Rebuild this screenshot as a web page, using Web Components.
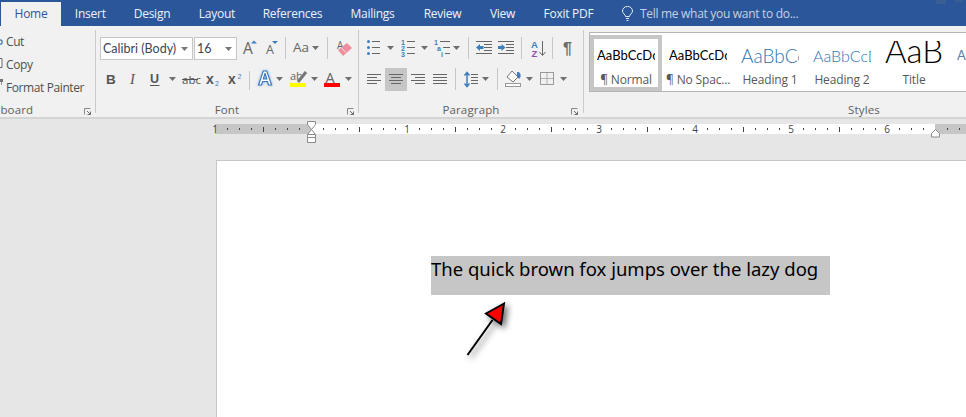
<!DOCTYPE html>
<html>
<head>
<meta charset="utf-8">
<title>Word</title>
<style>
  html, body { margin: 0; height: 417px; overflow: hidden; background: #e6e6e6; }
  body { font-family: "Open Sans", "Noto Sans", sans-serif; font-size: 11.5px; color: #555; }
</style>
</head>
<body>
<word-titlebar>
  <word-tab w="60" active>Home</word-tab>
  <word-tab w="58.5">Insert</word-tab>
  <word-tab w="65">Design</word-tab>
  <word-tab w="65">Layout</word-tab>
  <word-tab w="86">References</word-tab>
  <word-tab w="74">Mailings</word-tab>
  <word-tab w="66">Review</word-tab>
  <word-tab w="54">View</word-tab>
  <word-tab w="78">Foxit PDF</word-tab>
</word-titlebar>

<word-ribbon>
  <ribbon-group launcher style="width:179px;margin-left:-84px;--pad-top:0px;--pad-left:70px">
    <clip-row icon="cut">Cut</clip-row>
    <clip-row icon="copy">Copy</clip-row>
    <clip-row icon="painter">Format Painter</clip-row>
    <span slot="label" style="display:block;padding-left:2px">Clipboard</span>
  </ribbon-group>

  <ribbon-group launcher style="width:262px;--pad-left:4px">
    <tool-row>
      <combo-box w="93" mr="1" family="Lato">Calibri (Body)</combo-box>
      <combo-box w="43">16</combo-box>
      <rb-ico name="grow" gap="6"></rb-ico>
      <rb-ico name="shrink" gap="9"></rb-ico>
      <rb-ico name="sep" gap="7"></rb-ico>
      <rb-ico name="case" gap="7"></rb-ico>
      <rb-ico name="caret" gap="3"></rb-ico>
      <rb-ico name="sep" gap="8"></rb-ico>
      <rb-ico name="eraser" gap="8"></rb-ico>
    </tool-row>
    <tool-row>
      <rb-ico name="bold" gap="6"></rb-ico>
      <rb-ico name="italic" gap="13"></rb-ico>
      <rb-ico name="underline" gap="11"></rb-ico>
      <rb-ico name="caret" gap="9"></rb-ico>
      <rb-ico name="strike" gap="6"></rb-ico>
      <rb-ico name="sub" gap="8"></rb-ico>
      <rb-ico name="sup" gap="8"></rb-ico>
      <rb-ico name="sep2" gap="7"></rb-ico>
      <rb-ico name="effects" gap="8"></rb-ico>
      <rb-ico name="caret" gap="3"></rb-ico>
      <rb-ico name="highlight" gap="7"></rb-ico>
      <rb-ico name="caret" gap="4"></rb-ico>
      <rb-ico name="fontcolor" gap="6"></rb-ico>
      <rb-ico name="caret" gap="5"></rb-ico>
    </tool-row>
    <span slot="label">Font</span>
  </ribbon-group>

  <ribbon-group launcher style="width:224px;--pad-left:8px;--launch-right:5px">
    <tool-row>
      <rb-ico name="bullets"></rb-ico>
      <rb-ico name="caret" gap="7"></rb-ico>
      <rb-ico name="numbers" gap="7"></rb-ico>
      <rb-ico name="caret" gap="6"></rb-ico>
      <rb-ico name="multilevel" gap="6"></rb-ico>
      <rb-ico name="caret" gap="3"></rb-ico>
      <rb-ico name="sep" gap="8"></rb-ico>
      <rb-ico name="outdent" gap="7"></rb-ico>
      <rb-ico name="indent" gap="6"></rb-ico>
      <rb-ico name="sep" gap="7"></rb-ico>
      <rb-ico name="sort" gap="9"></rb-ico>
      <rb-ico name="sep" gap="7"></rb-ico>
      <rb-ico name="pilcrow" gap="10"></rb-ico>
    </tool-row>
    <tool-row>
      <rb-ico name="alignleft"></rb-ico>
      <rb-ico name="aligncenter" gap="4" active></rb-ico>
      <rb-ico name="alignright" gap="4"></rb-ico>
      <rb-ico name="justify" gap="8"></rb-ico>
      <rb-ico name="sep" gap="8"></rb-ico>
      <rb-ico name="linespacing" gap="8"></rb-ico>
      <rb-ico name="caret" gap="4"></rb-ico>
      <rb-ico name="sep" gap="8"></rb-ico>
      <rb-ico name="shading" gap="7"></rb-ico>
      <rb-ico name="caret" gap="5"></rb-ico>
      <rb-ico name="borders" gap="7"></rb-ico>
      <rb-ico name="caret" gap="6"></rb-ico>
    </tool-row>
    <span slot="label">Paragraph</span>
  </ribbon-group>

  <ribbon-group plain style="width:382px;--pad-top:2px;--pad-left:5px">
    <style-gallery>
      <style-tile selected size="13" color="#000" label="¶ Normal">AaBbCcDc</style-tile>
      <style-tile size="13" color="#000" label="¶ No Spac...">AaBbCcDc</style-tile>
      <style-tile size="19" color="#2e74b5" light label="Heading 1">AaBbCc</style-tile>
      <style-tile size="16" color="#2e74b5" light label="Heading 2">AaBbCcD</style-tile>
      <style-tile size="33" color="#000" light label="Title">AaB</style-tile>
      <style-tile size="13" color="#5b7fa6" label="">A</style-tile>
    </style-gallery>
    <span slot="label" style="display:block;width:382px;box-sizing:border-box;padding-left:178px">Styles</span>
  </ribbon-group>
</word-ribbon>

<word-ruler></word-ruler>

<doc-page>
  <selected-line>The quick brown fox jumps over the lazy dog</selected-line>
  <doc-arrow></doc-arrow>
</doc-page>

<script>
const G = "#666", B = "#3f7ebd";
const bar = (x, y, w, c) => `<rect x="${x}" y="${y}" width="${w}" height="1" fill="${c || G}"/>`;
const txt = (x, y, size, s, attrs) => `<text x="${x}" y="${y}" font-size="${size}" ${attrs || `fill="${G}"`}>${s}</text>`;
const SANS = `font-family="Open Sans,sans-serif"`;
const ARIAL = `font-family="Liberation Sans,sans-serif"`;

const ICONS = {
  caret: [7, `<path d="M0 9h7l-3.5 4z" fill="#6e6e6e"/>`],
  sep: [1, `<rect width="1" height="22" fill="#c6c6c6"/>`],
  sep2: [1, `<rect y="3" width="1" height="19" fill="#c6c6c6"/>`],
  grow: [14, txt(0, 17, 15.5, "A", SANS + ` fill="${G}"`) + `<path d="M8 6.5h6L11 3.5z" fill="${B}"/>`],
  shrink: [12, txt(0, 17, 12.5, "A", SANS + ` fill="${G}"`) + `<path d="M6 4h6L9 7z" fill="${B}"/>`],
  case: [16, txt(0, 15, 13.5, "Aa", SANS + ` fill="${G}"`)],
  eraser: [16, txt(1, 12, 10, "A", SANS + ` fill="${G}"`) + `<path d="M2 13l9-7 5 5-9 8z" fill="#ee8e9c"/><path d="M5 10.500l5 5" stroke="#fbdfe3"/>`],
  bold: [10, txt(0, 16, 13.5, "B", ARIAL + ` font-weight="bold" fill="#555"`)],
  italic: [10, txt(1, 16, 14.5, "I", `font-family="Liberation Serif,serif" font-style="italic" fill="#555"`)],
  underline: [10, txt(0, 15, 12.500, "U", ARIAL + ` font-weight="bold" fill="#555"`) + bar(0, 17, 9.5, "#555")],
  strike: [16, txt(0, 16, 11.5, "abc", SANS + ` fill="#555"`) + bar(0, 11, 16, "#555")],
  sub: [14, txt(0, 16, 14, "x", ARIAL + ` font-weight="bold" fill="#555"`) + txt(9, 18, 7, "2", ARIAL + ` fill="${B}"`)],
  sup: [14, txt(0, 16, 14, "x", ARIAL + ` font-weight="bold" fill="#555"`) + txt(9.5, 11, 7, "2", ARIAL + ` fill="${B}"`)],
  effects: [15, `<g style="filter:drop-shadow(0 0 1.5px #8db7e2)">` + txt(0.5, 17, 19, "A", SANS + ` font-weight="bold" fill="#fff" stroke="#3a78bc" stroke-width="1.1"`) + `</g>`],
  highlight: [17, txt(0, 12, 11, "ab", SANS + ` fill="${G}"`) + `<path d="M8 14l8-10" stroke="#777" stroke-width="3"/><rect y="15" width="16" height="4" fill="#ff0"/>`],
  fontcolor: [16, txt(1.500, 14.500, 14.500, "A", SANS + ` fill="${G}"`) + `<rect y="15" width="16" height="4" fill="#f00"/>`],
  bullets: [13, [4, 10, 16].map(y => `<circle cx="1.500" cy="${y + .5}" r="1.500" fill="${B}"/>` + bar(5, y, 8)).join("")],
  numbers: [14, ["1", "2", "3"].map((n, i) => txt(0, 7.500 + i * 6, 7, n, ARIAL + ` font-weight="bold" fill="${B}"`) + bar(6, 4 + i * 6, 8)).join("")],
  multilevel: [16, txt(0, 7.500, 7, "1", ARIAL + ` font-weight="bold" fill="${B}"`) + bar(6, 4, 10) + txt(3, 13.500, 7, "a", ARIAL + ` font-weight="bold" fill="${B}"`) + bar(9, 10, 7) + txt(7, 19.500, 7, "i", ARIAL + ` font-weight="bold" fill="${B}"`) + bar(11, 16, 5)],
  outdent: [16, bar(0, 4, 16) + bar(8, 7, 8) + bar(8, 10, 8) + bar(8, 13, 8) + bar(0, 16, 16) + `<path d="M0 10.500l4-3.500v2h3.500v3H4v2z" fill="${B}"/>`],
  indent: [16, bar(0, 4, 16) + bar(8, 7, 8) + bar(8, 10, 8) + bar(8, 13, 8) + bar(0, 16, 16) + `<path d="M7.500 10.500L3.500 7v2H0v3h3.500v2z" fill="${B}"/>`],
  sort: [14, txt(0, 11, 9.500, "A", ARIAL + ` font-weight="bold" fill="${B}"`) + txt(0.500, 20, 9.500, "Z", ARIAL + ` font-weight="bold" fill="#8f4fb3"`) + `<path d="M11.500 4v14M8.500 15l3 3.500 3-3.500" fill="none" stroke="${G}"/>`],
  pilcrow: [11, txt(0, 17, 16, "¶", ARIAL + ` font-weight="bold" fill="#6a6a6a"`)],
  alignleft: [14, bar(0, 6, 14) + bar(0, 9, 10) + bar(0, 12, 14) + bar(0, 15, 10)],
  aligncenter: [22, bar(4, 6, 14) + bar(6, 9, 10) + bar(4, 12, 14) + bar(6, 15, 10)],
  alignright: [14, bar(0, 6, 14) + bar(4, 9, 10) + bar(0, 12, 14) + bar(4, 15, 10)],
  justify: [14, bar(0, 6, 14) + bar(0, 9, 14) + bar(0, 12, 14) + bar(0, 15, 14)],
  linespacing: [14, `<path d="M3 5v13M0.500 7.500L3 4.500l2.500 3M0.500 15.500l2.500 3 2.500-3" fill="none" stroke="${B}" stroke-width="1.500"/>` + bar(7, 6, 7) + bar(7, 9, 7) + bar(7, 12, 7) + bar(7, 15, 7)],
  shading: [16, `<path d="M7 3l6 6-5 5-6-5z" fill="#fff" stroke="#777"/><path d="M12 4c3 0 4 2 3.500 5l-1.500 2-2-3z" fill="${B}"/><rect x=".5" y="15.500" width="15" height="3" fill="#fff" stroke="#999"/>`],
  borders: [14, `<path d="M.5 4.500h13v12H.5z" fill="none" stroke="#444" stroke-dasharray="1 1"/><path d="M.5 10.500h13M7 4.500v12" fill="none" stroke="#777" stroke-dasharray="1 1"/>`],
  launcher: [7, `<path d="M.5 6.500v-6h6" fill="none" stroke="#8a8a8a"/><path d="M3 3l3.500 3.500M6.500 3.500v3h-3" fill="none" stroke="#6e6e6e"/>`],
  cut: [18, `<circle cx="14" cy="12" r="2.200" fill="none" stroke="${B}" stroke-width="1.300"/>`],
  copy: [18, `<path d="M10 5.500h6v9h-6z" fill="#fff" stroke="#666"/>`],
  painter: [18, `<path d="M12 3h5v3h-5z" fill="#777"/><path d="M15.500 6v3" stroke="#999"/>`],
};

class WordTitlebar extends HTMLElement {
  constructor() {
    super();
    this.attachShadow({ mode: "open" });
    this.shadowRoot.innerHTML = `
      <style>
        :host { display: flex; height: 26px; padding-left: 1px; box-sizing: border-box;
                background: linear-gradient(#3a5f96, #3a5f96) 936px 0 / 10px 4px no-repeat, linear-gradient(#3a5f96, #3a5f96) 955px 0 / 7px 2px no-repeat, #2b579a; }
        .tabs { display: flex; }
        .tell { display: flex; align-items: center; gap: 7px; margin-left: 14.500px; color: #c5d1e4; font-size: 12px; letter-spacing: -.3px; }
        svg { display: block; }
      </style>
      <div class="tabs"><slot></slot></div>
      <div class="tell">
        <svg width="11" height="15" viewBox="0 0 11 15" fill="none" stroke="#e4e9f2">
          <path d="M3.500 10.500C3.500 8.500 .5 7.500 .5 5a5 4.600 0 0 1 10 0c0 2.500-3 3.500-3 5.500z"/>
          <path d="M4 12.500h3M4.500 14.500h2"/>
        </svg>
        <span>Tell me what you want to do...</span>
      </div>`;
  }
}

class WordTab extends HTMLElement {
  constructor() {
    super();
    this.attachShadow({ mode: "open" });
    this.shadowRoot.innerHTML = `
      <style>
        :host { display: flex; align-items: center; justify-content: center; height: 26px; color: #eef2f8; font-size: 12px; letter-spacing: -.25px; box-sizing: border-box; }
        :host([active]) { background: #f1f1f1; color: #2b579a; margin-top: 2px; height: 24px; padding-bottom: 2px; }
      </style>
      <slot></slot>`;
  }
  connectedCallback() {
    this.style.width = this.getAttribute("w") + "px";
  }
}

class WordRibbon extends HTMLElement {
  constructor() {
    super();
    this.attachShadow({ mode: "open" });
    this.shadowRoot.innerHTML = `
      <style>
        :host { display: flex; height: 93px; box-sizing: border-box; padding-top: 4px; background: #f1f1f1; border-bottom: 2px solid #d4d4d4; overflow: hidden; }
      </style>
      <slot></slot>`;
  }
}

class RibbonGroup extends HTMLElement {
  constructor() {
    super();
    this.attachShadow({ mode: "open" });
    this.shadowRoot.innerHTML = `
      <style>
        :host { display: flex; flex: none; flex-direction: column; position: relative; height: 83px; box-sizing: content-box; border-right: 1px solid #c9c9c9; }
        :host([plain]) { border-right: 0; }
        .body { flex: 1; display: flex; flex-direction: column; gap: 8px; padding: var(--pad-top, 7px) 0 0 var(--pad-left, 0); }
        :host([style*="--pad-top:0px"]) .body { gap: 0; }
        .label { height: 14px; line-height: 14px; margin-bottom: -4px; text-align: center; font-size: 11.5px; color: #606060; letter-spacing: .15px; }
        .launch { position: absolute; right: var(--launch-right, 4px); bottom: -2px; display: none; width: 7px; height: 7px; }
        :host([launcher]) .launch { display: block; }
      </style>
      <div class="body"><slot></slot></div>
      <div class="label"><slot name="label"></slot></div>
      <svg class="launch" viewBox="0 0 7 7">${ICONS.launcher[1]}</svg>`;
  }
}

class ToolRow extends HTMLElement {
  constructor() {
    super();
    this.attachShadow({ mode: "open" });
    this.shadowRoot.innerHTML = `
      <style>:host { display: flex; height: 23px; align-items: stretch; }</style>
      <slot></slot>`;
  }
}

class RbIco extends HTMLElement {
  constructor() {
    super();
    this.attachShadow({ mode: "open" });
  }
  connectedCallback() {
    const [w, art] = ICONS[this.getAttribute("name")];
    this.shadowRoot.innerHTML = `
      <style>
        :host { display: block; flex: none; height: 23px; }
        :host([active]) { background: #c6c6c6; }
        svg { display: block; overflow: visible; }
      </style>
      <svg width="${w}" height="23" viewBox="0 0 ${w} 23">${art}</svg>`;
    this.style.marginLeft = (this.getAttribute("gap") || 0) + "px";
  }
}

class ComboBox extends HTMLElement {
  constructor() {
    super();
    this.attachShadow({ mode: "open" });
    this.shadowRoot.innerHTML = `
      <style>
        :host { display: flex; flex: none; align-items: center; justify-content: space-between; box-sizing: border-box; height: 23px; padding: 0 4px 0 2px; background: #fff; border: 1px solid #c6c6c6; color: #3e4658; font-family: Lato, sans-serif; font-size: 12.500px; }
        svg { display: block; }
      </style>
      <span><slot></slot></span>
      <svg width="7" height="4" viewBox="0 0 7 4"><path d="M0 0h7L3.500 4z" fill="#777"/></svg>`;
  }
  connectedCallback() {
    this.style.width = this.getAttribute("w") + "px";
    this.style.marginRight = (this.getAttribute("mr") || 0) + "px";
  }
}

class ClipRow extends HTMLElement {
  constructor() {
    super();
    this.attachShadow({ mode: "open" });
  }
  connectedCallback() {
    this.shadowRoot.innerHTML = `
      <style>
        :host { display: flex; align-items: center; gap: 2px; height: 23px; padding-bottom: 1px; box-sizing: border-box; color: #505050; font-size: 12px; letter-spacing: -.4px; white-space: nowrap; }
        svg { display: block; flex: none; }
      </style>
      <svg width="18" height="23" viewBox="0 0 18 23">${ICONS[this.getAttribute("icon")][1]}</svg>
      <slot></slot>`;
  }
}

class StyleGallery extends HTMLElement {
  constructor() {
    super();
    this.attachShadow({ mode: "open" });
    this.shadowRoot.innerHTML = `
      <style>
        :host { display: flex; box-sizing: border-box; height: 59.500px; padding-top: 1.500px; background: #fff; border: 1px solid #b4b4b4; border-right: 0; overflow: hidden; }
      </style>
      <slot></slot>`;
  }
}

class StyleTile extends HTMLElement {
  constructor() {
    super();
    this.attachShadow({ mode: "open" });
  }
  connectedCallback() {
    const weight = this.hasAttribute("light") ? 300 : 400;
    this.shadowRoot.innerHTML = `
      <style>
        :host { display: flex; flex: none; flex-direction: column; box-sizing: border-box; width: 72px; height: 56px; border: 4px solid #fff; }
        :host([selected]) { border-color: #c6c6c6; }
        .prev { height: 33px; margin: 0 3px; overflow: hidden; display: flex; align-items: center; white-space: nowrap; font-family: Lato, sans-serif;
                font-size: ${this.getAttribute("size")}px; font-weight: ${weight}; color: ${this.getAttribute("color")}; }
        .prev.big { justify-content: center; margin: 2px 0 0; height: 31px; align-items: flex-start; }
        .prev.big span { margin-top: -11px; }
        .lab { text-align: center; height: 15px; line-height: 16px; font-size: 12px; letter-spacing: -.15px; color: #585858; white-space: nowrap; }
      </style>
      <div class="prev ${this.getAttribute("label") === "Title" ? "big" : ""}"><span><slot></slot></span></div>
      <div class="lab">${this.getAttribute("label")}</div>`;
  }
}

class WordRuler extends HTMLElement {
  constructor() {
    super();
    this.attachShadow({ mode: "open" });
    let cells = "";
    for (let i = 0; i <= 62; i++) {
      let inner = "";
      if (i === 0) inner = `<b>1</b>`;
      else if (i === 8 || i === 60) inner = "";
      else if (i % 8 === 0) inner = `<b>${(i - 8) / 8}</b>`;
      else if (i % 4 === 0) inner = `<i class="long"></i>`;
      else inner = `<i></i>`;
      cells += `<span>${inner}</span>`;
    }
    this.shadowRoot.innerHTML = `
      <style>
        :host { display: flex; position: relative; height: 10px; margin-top: 5px; padding-left: 209px; overflow: visible;
                background: linear-gradient(to right, transparent 215px, #c6c6c6 215px 311px, #fff 311px 935px, #c6c6c6 935px); }
        span { flex: none; width: 12px; height: 10px; display: flex; align-items: center; justify-content: center; }
        i { display: block; width: 1px; height: 2px; background: #444; }
        i.long { height: 5px; }
        b { font-weight: 400; font-size: 10px; color: #444; line-height: 10px; font-family: "Open Sans", sans-serif; }
        .marker { position: absolute; }
      </style>
      ${cells}
      <svg class="marker" style="left:307px;top:-3px" width="9" height="22" viewBox="0 0 9 22">
        <path d="M.5.5h8v3L4.500 8.500.5 3.500zM4.500 8.500l4 5v0h-8z" fill="#fff" stroke="#8a8a8a"/>
        <path d="M.5 16.500h8v5h-8zM.5 13.500h8v3h-8z" fill="#fff" stroke="#8a8a8a"/>
      </svg>
      <svg class="marker" style="left:931px;top:5px" width="9" height="9" viewBox="0 0 9 9">
        <path d="M4.500.5l4 4v3.500h-8V4.500z" fill="#fff" stroke="#8a8a8a"/>
      </svg>`;
  }
}

class DocPage extends HTMLElement {
  constructor() {
    super();
    this.attachShadow({ mode: "open" });
    this.shadowRoot.innerHTML = `
      <style>
        :host { display: block; position: relative; box-sizing: border-box; height: 257px; margin: 26px 0 0 216px; padding: 95px 0 0 214px; background: #fff; border: 1px solid #c6c6c6; border-bottom: 0; border-right: 0; }
      </style>
      <slot></slot>`;
  }
}

class SelectedLine extends HTMLElement {
  constructor() {
    super();
    this.attachShadow({ mode: "open" });
    this.shadowRoot.innerHTML = `
      <style>
        :host { display: block; width: 399px; height: 39px; background: #c6c6c6; color: #000; font-family: "Noto Sans", sans-serif; font-size: 18.500px; line-height: 26px; white-space: nowrap; }
      </style>
      <slot></slot>`;
  }
}

class DocArrow extends HTMLElement {
  constructor() {
    super();
    this.attachShadow({ mode: "open" });
    this.shadowRoot.innerHTML = `
      <style>
        :host { position: absolute; left: 245px; top: 140px; display: block; width: 50px; height: 60px; }
        svg { display: block; overflow: visible; filter: drop-shadow(3px 3px 3px rgba(0,0,0,.6)); }
      </style>
      <svg width="50" height="60" viewBox="0 0 50 60">
        <path d="M5.500 54L30.500 19" stroke="#000" stroke-width="2" fill="none"/>
        <path d="M42 2.500L24 12.500 39 23z" fill="#f00" stroke="#000" stroke-width="2" stroke-linejoin="miter"/>
      </svg>`;
  }
}

customElements.define("word-titlebar", WordTitlebar);
customElements.define("word-tab", WordTab);
customElements.define("word-ribbon", WordRibbon);
customElements.define("ribbon-group", RibbonGroup);
customElements.define("tool-row", ToolRow);
customElements.define("rb-ico", RbIco);
customElements.define("combo-box", ComboBox);
customElements.define("clip-row", ClipRow);
customElements.define("style-gallery", StyleGallery);
customElements.define("style-tile", StyleTile);
customElements.define("word-ruler", WordRuler);
customElements.define("doc-page", DocPage);
customElements.define("selected-line", SelectedLine);
customElements.define("doc-arrow", DocArrow);
</script>
</body>
</html>
